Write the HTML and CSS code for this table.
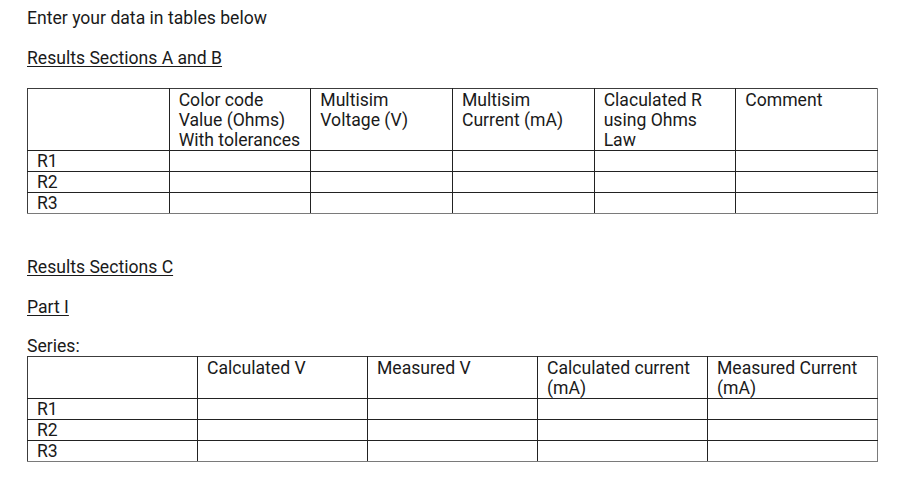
FILE: index.html
```html
<!DOCTYPE html>
<html lang="en">
<head>
<meta charset="utf-8">
<title>Results</title>
<link rel="stylesheet" href="styles.css">
</head>
<body>
<main class="doc">
  <p class="line">Enter your data in tables below</p>
  <p class="line gap u">Results Sections A and B</p>
  <table class="grid t1">
    <colgroup><col><col><col><col><col><col></colgroup>
    <tr class="head">
      <td></td>
      <td>Color code<br>Value (Ohms)<br>With tolerances</td>
      <td>Multisim<br>Voltage (V)</td>
      <td>Multisim<br>Current (mA)</td>
      <td>Claculated R<br>using Ohms<br>Law</td>
      <td>Comment</td>
    </tr>
    <tr><td>R1</td><td></td><td></td><td></td><td></td><td></td></tr>
    <tr><td>R2</td><td></td><td></td><td></td><td></td><td></td></tr>
    <tr><td>R3</td><td></td><td></td><td></td><td></td><td></td></tr>
  </table>
  <p class="line sec u">Results Sections C</p>
  <p class="line gap u">Part I</p>
  <p class="line gap2">Series:</p>
  <table class="grid t2">
    <colgroup><col><col><col><col><col></colgroup>
    <tr class="head">
      <td></td>
      <td>Calculated V</td>
      <td>Measured V</td>
      <td>Calculated current<br>(mA)</td>
      <td>Measured Current<br>(mA)</td>
    </tr>
    <tr><td>R1</td><td></td><td></td><td></td><td></td></tr>
    <tr><td>R2</td><td></td><td></td><td></td><td></td></tr>
    <tr><td>R3</td><td></td><td></td><td></td><td></td></tr>
  </table>
</main>
</body>
</html>
```
FILE: styles.css
```css
html, body {
  margin: 0;
  padding: 0;
  background: #ffffff;
}

body {
  font-family: Roboto, "Liberation Sans", sans-serif;
  font-size: 17.6px;
  font-weight: 400;
  line-height: 20px;
  color: #1a1a1a;
}

.doc {
  padding: 8px 0 0 27px;
}

.line {
  margin: 0;
  height: 20px;
}

.gap {
  margin-top: 20px;
}

.gap2 {
  margin-top: 19px;
}

.sec {
  margin-top: 43px;
}

.u {
  text-decoration: underline;
  text-decoration-thickness: 1px;
  text-underline-offset: 2px;
}

.grid {
  border-collapse: collapse;
  table-layout: fixed;
  width: 851px;
  border-top: 1px solid #3c3c3c;
  border-left: 1px solid #3c3c3c;
  border-right: 1px solid #7a7a7a;
  border-bottom: 1px solid #7a7a7a;
}

.t1 {
  margin-top: 20px;
}

.t2 {
  margin-top: 0;
}

.grid td {
  border: 1px solid #222222;
  padding: 0 4px 0 9px;
  height: 20px;
  vertical-align: top;
  white-space: nowrap;
}

.grid tr:first-child td {
  border-top-color: #3c3c3c;
}

.grid tr:last-child td {
  border-bottom-color: #7a7a7a;
}

.grid td:first-child {
  border-left-color: #3c3c3c;
}

.grid td:last-child {
  border-right-color: #7a7a7a;
}

.t1 .head td {
  height: 60px;
  padding-top: 1px;
}

.t2 .head td {
  height: 40px;
  padding-top: 1px;
}
```
